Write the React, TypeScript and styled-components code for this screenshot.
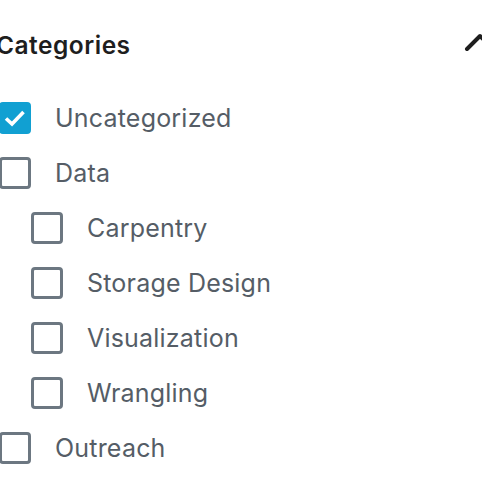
import styled, { createGlobalStyle } from 'styled-components';

const GlobalStyle = createGlobalStyle`
    html, body {
        margin: 0;
        padding: 0;
        background: #ffffff;
    }
    body {
        font-family: Inter, "Noto Sans", sans-serif;
        overflow: hidden;
    }
`;

const Panel = styled.section`
    width: 482px;
    height: 486px;
    margin-left: -2px;
    padding-top: 27px;
    box-sizing: border-box;
`;

const PanelHeader = styled.div`
    display: flex;
    align-items: center;
    justify-content: space-between;
    height: 36px;
`;

const PanelTitle = styled.h2`
    margin: 0 0 0 -2px;
    font-size: 24.5px;
    font-weight: 600;
    color: #1e1e1e;
    letter-spacing: 0.5px;
`;

const Toggle = styled.div`
    width: 40px;
    height: 24px;
    margin-right: -20px;
    display: flex;
    align-items: center;
    svg {
        overflow: visible;
    }
`;

const CategoryList = styled.ul`
    list-style: none;
    margin: 39px 0 0 1px;
    padding: 0;
    display: flex;
    flex-direction: column;
    gap: 23px;
`;

const CategoryItem = styled.li<{ $depth: number }>`
    display: flex;
    align-items: center;
    height: 32px;
    padding-left: ${({ $depth }) => $depth * 32}px;
`;

const Box = styled.span<{ $checked: boolean }>`
    width: 32px;
    height: 32px;
    box-sizing: border-box;
    border-radius: 4px;
    border: 3px solid ${({ $checked }) => ($checked ? '#11a0d2' : '#6c7781')};
    background: ${({ $checked }) => ($checked ? '#11a0d2' : '#ffffff')};
    display: flex;
    align-items: center;
    justify-content: center;
    flex-shrink: 0;
`;

const Label = styled.span`
    margin-left: 24px;
    font-size: 25px;
    color: #555d66;
    letter-spacing: 0.2px;
`;

const categories = [
    { name: 'Uncategorized', depth: 0, checked: true },
    { name: 'Data', depth: 0, checked: false },
    { name: 'Carpentry', depth: 1, checked: false },
    { name: 'Storage Design', depth: 1, checked: false },
    { name: 'Visualization', depth: 1, checked: false },
    { name: 'Wrangling', depth: 1, checked: false },
    { name: 'Outreach', depth: 0, checked: false },
];

const App = () => {
    return (
        <Panel>
            <GlobalStyle />
            <PanelHeader>
                <PanelTitle>Categories</PanelTitle>
                <Toggle>
                    <svg width="40" height="24" viewBox="0 0 40 24">
                        <path d="M7 16 L20 3 L33 16" fill="none" stroke="#1e1e1e" strokeWidth="4" strokeLinecap="round" strokeLinejoin="round" />
                    </svg>
                </Toggle>
            </PanelHeader>
            <CategoryList>
                {categories.map((category) => (
                    <CategoryItem key={category.name} $depth={category.depth}>
                        <Box $checked={category.checked}>
                            {category.checked && (
                                <svg width="26" height="26" viewBox="0 0 26 26">
                                    <path d="M4 13.5 L10 19 L21.5 7" fill="none" stroke="#ffffff" strokeWidth="3.6" />
                                </svg>
                            )}
                        </Box>
                        <Label>{category.name}</Label>
                    </CategoryItem>
                ))}
            </CategoryList>
        </Panel>
    );
};

export default App;
